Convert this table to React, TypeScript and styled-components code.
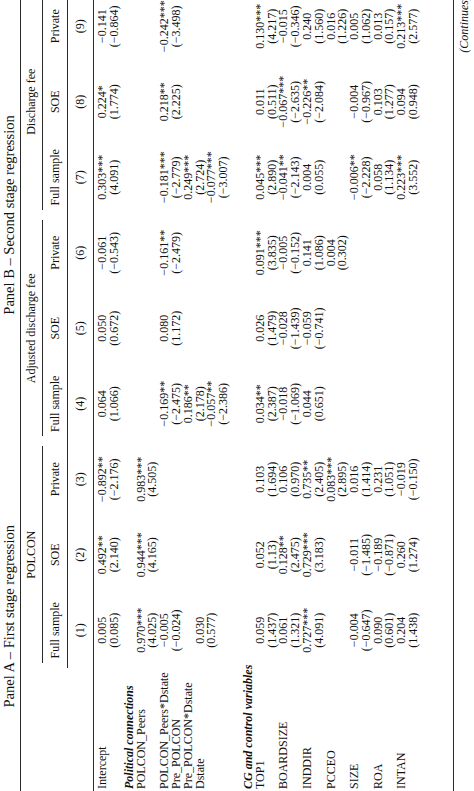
import styled, { createGlobalStyle } from "styled-components";

const GlobalStyle = createGlobalStyle`
  html, body {
    margin: 0;
    padding: 0;
    background: #fff;
  }
  body {
    overflow: hidden;
  }
`;

// the printed table is turned a quarter turn: it is laid out upright here and rotated
const COLS = "123px repeat(9, 75.5px)";

const Viewport = styled.div`
  width: 474px;
  height: 791px;
  overflow: hidden;
  background: #fff;
`;

const Sheet = styled.div`
  width: 803px;
  height: 474px;
  transform-origin: 0 0;
  transform: translateY(791px) rotate(-90deg);
  font-family: "Liberation Serif", "Times New Roman", serif;
  font-size: 12px;
  color: #111;
  display: flex;
  flex-direction: column;
`;

const Row = styled.div<{ $h: number }>`
  display: grid;
  grid-template-columns: ${COLS};
  height: ${(p) => p.$h}px;
  align-items: center;
  white-space: nowrap;
`;

const PanelTitle = styled.div<{ $span: string }>`
  grid-column: ${(p) => p.$span};
  text-align: center;
  font-size: 14.5px;
`;

const GroupTitle = styled.div<{ $span: string }>`
  grid-column: ${(p) => p.$span};
  align-self: stretch;
  display: flex;
  align-items: center;
  justify-content: center;
  margin: 0 5px;
  border-bottom: 1px solid #2a2a2a;
`;

const Rule = styled.div<{ $from?: number }>`
  height: 1px;
  margin-left: ${(p) => p.$from ?? 0}px;
  background: #2a2a2a;
`;

const Cell = styled.div`
  text-align: center;
`;

const Label = styled.div`
  padding-left: 2px;
`;

const Body = styled.div`
  height: 362px;
  padding-top: 3px;
  box-sizing: border-box;
`;

const Line = styled.div`
  display: grid;
  grid-template-columns: ${COLS};
  height: 11.8px;
  line-height: 11.8px;
  white-space: nowrap;
`;

const Heading = styled.div<{ $gap: number }>`
  height: 11.8px;
  line-height: 11.8px;
  margin-top: ${(p) => p.$gap}px;
  padding-left: 2px;
  font-weight: bold;
  font-style: italic;
`;

const Footer = styled.div`
  height: 20px;
  line-height: 20px;
  padding-right: 8px;
  text-align: right;
  font-style: italic;
`;

type DataLine =
  | { kind: "line"; label?: string; v: string[] }
  | { kind: "heading"; text: string; gap: number };

const L = (label: string, ...v: string[]): DataLine => ({ kind: "line", label, v });

const lines: DataLine[] = [
  L("Intercept", "0.005", "0.492**", "−0.892**", "0.064", "0.050", "−0.061", "0.303***", "0.224*", "−0.141"),
  L("", "(0.085)", "(2.140)", "(−2.176)", "(1.066)", "(0.672)", "(−0.543)", "(4.091)", "(1.774)", "(−0.864)"),
  { kind: "heading", text: "Political connections", gap: 3 },
  L("POLCON_Peers", "0.970***", "0.944***", "0.983***"),
  L("", "(4.025)", "(4.165)", "(4.505)"),
  L("POLCON_Peers*Dstate", "−0.005", "", "", "−0.169**", "0.080", "−0.161**", "−0.181***", "0.218**", "−0.242***"),
  L("Pre_POLCON", "(−0.024)", "", "", "(−2.475)", "(1.172)", "(−2.479)", "(−2.779)", "(2.225)", "(−3.498)"),
  L("Pre_POLCON*Dstate", "", "", "", "0.186**", "", "", "0.249***"),
  L("Dstate", "0.030", "", "", "(2.178)", "", "", "(2.724)"),
  L("", "(0.577)", "", "", "−0.057**", "", "", "−0.077***"),
  L("", "", "", "", "(−2.386)", "", "", "(−3.007)"),
  { kind: "heading", text: "CG and control variables", gap: 13 },
  L("TOP1", "0.059", "0.052", "0.103", "0.034**", "0.026", "0.091***", "0.045***", "0.011", "0.130***"),
  L("", "(1.437)", "(1.13)", "(1.694)", "(2.387)", "(1.479)", "(3.835)", "(2.890)", "(0.511)", "(4.217)"),
  L("BOARDSIZE", "0.061", "0.128**", "0.106", "−0.018", "−0.028", "−0.005", "−0.041**", "−0.067***", "−0.015"),
  L("", "(1.321)", "(2.475)", "(0.970)", "(−1.069)", "(−1.439)", "(−0.152)", "(−2.143)", "(−2.635)", "(−0.346)"),
  L("INDDIR", "0.727***", "0.729***", "0.735**", "0.044", "−0.059", "0.141", "0.004", "−0.226**", "0.240"),
  L("", "(4.091)", "(3.183)", "(2.405)", "(0.651)", "(−0.741)", "(1.086)", "(0.055)", "(−2.084)", "(1.560)"),
  L("PCCEO", "", "", "0.083***", "", "", "0.004", "", "", "0.016"),
  L("", "", "", "(2.895)", "", "", "(0.302)", "", "", "(1.226)"),
  L("SIZE", "−0.004", "−0.011", "0.016", "", "", "", "−0.006**", "−0.004", "0.005"),
  L("", "(−0.647)", "(−1.485)", "(1.414)", "", "", "", "(−2.228)", "(−0.967)", "(1.062)"),
  L("ROA", "0.090", "−0.189", "0.231", "", "", "", "0.058", "0.103", "0.013"),
  L("", "(0.601)", "(−0.871)", "(1.051)", "", "", "", "(1.134)", "(1.277)", "(0.157)"),
  L("INTAN", "0.204", "0.260", "−0.019", "", "", "", "0.223***", "0.094", "0.213***"),
  L("", "(1.438)", "(1.274)", "(−0.150)", "", "", "", "(3.552)", "(0.948)", "(2.577)"),
];

const titles = ["Full sample", "SOE", "Private", "Full sample", "SOE", "Private", "Full sample", "SOE", "Private"];

export default function App() {
  return (
    <>
      <GlobalStyle />
      <Viewport>
        <Sheet>
          <Row $h={20}>
            <PanelTitle $span="1 / 5">Panel A – First stage regression</PanelTitle>
            <PanelTitle $span="5 / 11">Panel B – Second stage regression</PanelTitle>
          </Row>
          <Rule />
          <Row $h={22}>
            <GroupTitle $span="2 / 5">POLCON</GroupTitle>
            <GroupTitle $span="5 / 8">Adjusted discharge fee</GroupTitle>
            <GroupTitle $span="8 / 11">Discharge fee</GroupTitle>
          </Row>
          <Row $h={25}>
            <Label />
            {titles.map((t, i) => (
              <Cell key={i}>{t}</Cell>
            ))}
          </Row>
          <Rule $from={123} />
          <Row $h={25}>
            <Label />
            {titles.map((_, i) => (
              <Cell key={i}>({i + 1})</Cell>
            ))}
          </Row>
          <Rule />
          <Body>
            {lines.map((ln, i) =>
              ln.kind === "heading" ? (
                <Heading key={i} $gap={ln.gap}>
                  {ln.text}
                </Heading>
              ) : (
                <Line key={i}>
                  <Label>{ln.label}</Label>
                  {Array.from({ length: 9 }, (_, j) => (
                    <Cell key={j}>{ln.v[j] ?? ""}</Cell>
                  ))}
                </Line>
              )
            )}
          </Body>
          <Rule />
          <Footer>(Continues)</Footer>
        </Sheet>
      </Viewport>
    </>
  );
}
